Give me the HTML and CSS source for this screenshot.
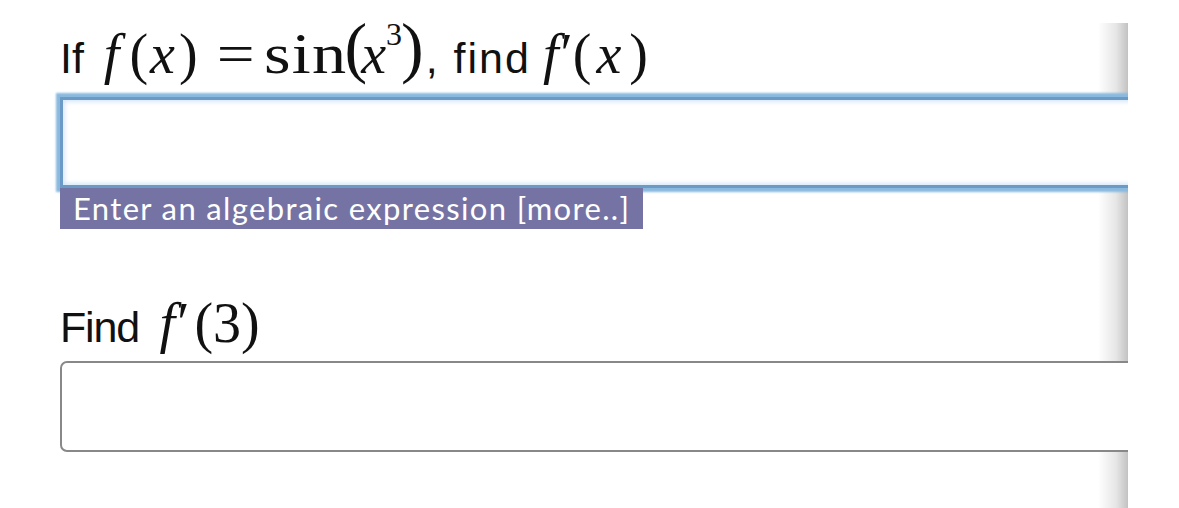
FILE: index.html
```html
<!DOCTYPE html>
<html>
<head>
<meta charset="utf-8">
<link rel="stylesheet" href="styles.css">
</head>
<body>
<div class="scroller">
  <div class="question">
    <div class="label">If <span class="m m1"><i class="f f1">f</i><span class="p">(</span><i class="x">x</i><span class="p pr">)</span><span class="eq">=</span><span class="fn">sin</span><span class="big">(</span><i class="x xb">x</i><sup class="sup">3</sup><span class="big">)</span></span><span class="comma">,</span> <span class="word">find</span> <span class="m m2"><i class="f">f</i><span class="prime">′</span><span class="p">(</span><i class="x">x</i><span class="p pr2">)</span></span></div>
    <div class="field">
      <div class="input focused"></div>
      <div class="tip">Enter an algebraic expression [more..]</div>
    </div>
  </div>
  <div class="question q2">
    <div class="label">Find <span class="m m3"><i class="f">f</i><span class="prime">′</span><span class="p">(</span><span class="num">3</span><span class="p">)</span></span></div>
    <div class="field">
      <div class="input plain"></div>
    </div>
  </div>
</div>
</body>
</html>
```

FILE: styles.css
```css
html, body {
  margin: 0;
  padding: 0;
  background: #ffffff;
}
body {
  height: 508px;
  overflow: hidden;
}
.scroller {
  margin-top: 23px;
  width: 1068px;
  height: 485px;
  padding-left: 60px;
  overflow: hidden;
  background: linear-gradient(to left, #c2c2c2 0, #e6e6e6 12px, #ffffff 30px);
}
.question {
  display: flex;
  flex-direction: column;
}
.label {
  font-family: "Liberation Sans", Arial, sans-serif;
  font-size: 43px;
  color: #111;
  line-height: 52px;
  padding-bottom: 8px;
  margin-top: 1px;
  white-space: nowrap;
}
.word {
  letter-spacing: 2px;
  margin-left: 4px;
}
.m {
  font-family: "Liberation Serif", "Times New Roman", serif;
  font-size: 56px;
}
.m i {
  font-style: italic;
}
.m1 {
  margin-left: 8px;
}
.m2 {
  margin-left: 0;
}
.m3 {
  margin-left: 10px;
}
.f {
  margin-right: 2px;
}
.f1 {
  margin-right: 10px;
}
.p {
  display: inline-block;
}
.pr {
  margin-left: 4px;
}
.pr2 {
  margin-left: 8px;
}
.x {
  margin-left: 2px;
}
.m2 .x {
  margin-left: 5px;
}
.xb {
  margin-left: -6px;
}
.eq {
  display: inline-block;
  transform: scaleX(1.2);
  margin: 0 13px 0 22px;
}
.fn {
  display: inline-block;
  letter-spacing: 1px;
  transform: scaleX(1.22);
  transform-origin: left center;
  margin-right: 12px;
}
.big {
  display: inline-block;
  font-size: 68px;
  position: relative;
  top: -3px;
}
.sup {
  font-size: 32px;
  line-height: 40px;
  vertical-align: 0;
  position: relative;
  top: -28px;
  margin-left: 0;
  margin-right: -1px;
}
.comma {
  margin-left: 2px;
}
.prime {
  font-family: "Liberation Serif", serif;
  margin-right: 0;
}
.m3 .prime {
  margin-right: 5px;
}
.field {
  position: relative;
  margin-top: 5px;
  width: 1120px;
}
.input {
  box-sizing: border-box;
  height: 91px;
  width: 1120px;
  background: #ffffff;
}
.focused {
  border: 3px solid #6c9ac6;
  box-shadow: 0 0 2px 4px #8ab9df, inset 0 0 4px 2px #d6e7f8;
}
.plain {
  border: 2.5px solid #888888;
  border-radius: 7px;
}
.tip {
  position: absolute;
  left: 0;
  top: 91px;
  height: 41px;
  box-sizing: border-box;
  padding: 0 13px 0 13px;
  background: #7573a3;
  color: #ffffff;
  font-family: Lato, "Open Sans", sans-serif;
  font-size: 31px;
  letter-spacing: 1.35px;
  line-height: 41px;
  white-space: nowrap;
}
.q2 {
  margin-top: 109px;
}
.q2 .label {
  margin-top: 0;
  padding-bottom: 2px;
  letter-spacing: -1.2px;
}
.q2 .m {
  letter-spacing: 0;
}
.q2 .field {
  margin-top: 6px;
}
```
